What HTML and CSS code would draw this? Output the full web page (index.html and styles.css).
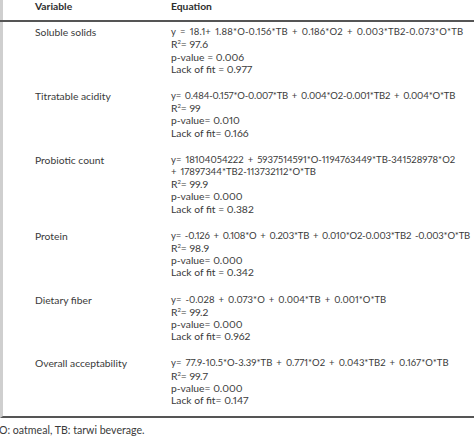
FILE: index.html
```html
<!DOCTYPE html>
<html>
<head>
<meta charset="utf-8">
<link rel="stylesheet" href="styles.css">
</head>
<body>
<div class="table">
  <div class="head">
    <div class="var">Variable</div>
    <div class="eq">Equation</div>
  </div>
  <div class="body">
    <div class="row">
      <div class="var">Soluble solids</div>
      <div class="eq">
        <div class="ln y wide">y = 18.1+ 1.88*O-0.156*TB + 0.186*O2 + 0.003*TB2-0.073*O*TB</div>
        <div class="ln">R<sup>2</sup>= 97.6</div>
        <div class="ln">p-value = 0.006</div>
        <div class="ln">Lack of fit = 0.977</div>
      </div>
    </div>
    <div class="row">
      <div class="var">Titratable acidity</div>
      <div class="eq">
        <div class="ln y tight">y= 0.484-0.157*O-0.007*TB + 0.004*O2-0.001*TB2 + 0.004*O*TB</div>
        <div class="ln">R<sup>2</sup>= 99</div>
        <div class="ln">p-value= 0.010</div>
        <div class="ln">Lack of fit= 0.166</div>
      </div>
    </div>
    <div class="row">
      <div class="var">Probiotic count</div>
      <div class="eq">
        <div class="ln y">y= 18104054222 + 5937514591*O-1194763449*TB-341528978*O2</div>
        <div class="ln y">+ 17897344*TB2-113732112*O*TB</div>
        <div class="ln">R<sup>2</sup>= 99.9</div>
        <div class="ln">p-value= 0.000</div>
        <div class="ln">Lack of fit = 0.382</div>
      </div>
    </div>
    <div class="row">
      <div class="var">Protein</div>
      <div class="eq">
        <div class="ln y tight">y= -0.126 + 0.108*O + 0.203*TB + 0.010*O2-0.003*TB2 -0.003*O*TB</div>
        <div class="ln">R<sup>2</sup>= 98.9</div>
        <div class="ln">p-value= 0.000</div>
        <div class="ln">Lack of fit = 0.342</div>
      </div>
    </div>
    <div class="row">
      <div class="var">Dietary fiber</div>
      <div class="eq">
        <div class="ln y">y= -0.028 + 0.073*O + 0.004*TB + 0.001*O*TB</div>
        <div class="ln">R<sup>2</sup>= 99.2</div>
        <div class="ln">p-value= 0.000</div>
        <div class="ln">Lack of fit= 0.962</div>
      </div>
    </div>
    <div class="row last">
      <div class="var">Overall acceptability</div>
      <div class="eq">
        <div class="ln y">y= 77.9-10.5*O-3.39*TB + 0.771*O2 + 0.043*TB2 + 0.167*O*TB</div>
        <div class="ln">R<sup>2</sup>= 99.7</div>
        <div class="ln">p-value= 0.000</div>
        <div class="ln">Lack of fit= 0.147</div>
      </div>
    </div>
  </div>
</div>
<div class="note">O: oatmeal, TB: tarwi beverage.</div>
</body>
</html>
```
FILE: styles.css
```css
html, body {
  margin: 0;
  padding: 0;
  background: #ffffff;
}
body {
  width: 474px;
  height: 436px;
  overflow: hidden;
  font-family: "Lato", "Liberation Sans", sans-serif;
  font-size: 10.3px;
  line-height: 12.2px;
  color: #3a3a3a;
  font-variant-numeric: proportional-nums;
}
.table {
  border-left: 3px solid #cfcfcf;
}
.head {
  display: grid;
  grid-template-columns: 136px 1fr;
  padding: 0 0 8px 35px;
  margin-left: -3px;
  font-weight: bold;
  color: #2e2e2e;
  border-bottom: 2px solid #555555;
}
.body {
  padding-top: 4px;
  margin-left: -3px;
  border-left: 3px solid #cfcfcf;
  border-bottom: 2px solid #555555;
}
.row {
  display: grid;
  grid-template-columns: 136px 1fr;
  padding: 0 0 15px 32px;
}
.row.last {
  padding-bottom: 10px;
}
.ln {
  white-space: nowrap;
}
.ln.y {
  font-size: 9.5px;
  word-spacing: 1.6px;
}
.ln.y.wide {
  letter-spacing: 0.15px;
}
.ln.y.tight {
  letter-spacing: -0.2px;
}
sup {
  font-size: 6px;
  line-height: 0;
  vertical-align: 4px;
}
.note {
  padding: 6px 0 0 0;
  margin-left: -1px;
  font-size: 10.6px;
  color: #3a3a3a;
}
```
